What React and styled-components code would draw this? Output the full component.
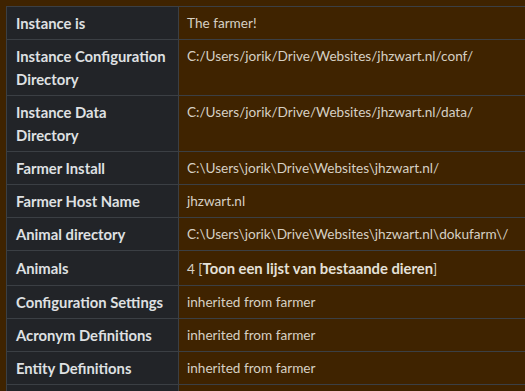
import React from 'react';
import styled, { createGlobalStyle } from 'styled-components';

const GlobalStyle = createGlobalStyle`
  html, body {
    margin: 0;
    background: #3f2300;
    overflow: hidden;
  }
`;

const rows = [
  { label: 'Instance is', value: 'The farmer!' },
  { label: 'Instance Configuration Directory', value: 'C:/Users/jorik/Drive/Websites/jhzwart.nl/conf/' },
  { label: 'Instance Data Directory', value: 'C:/Users/jorik/Drive/Websites/jhzwart.nl/data/' },
  { label: 'Farmer Install', value: 'C:\\Users\\jorik\\Drive\\Websites\\jhzwart.nl/' },
  { label: 'Farmer Host Name', value: 'jhzwart.nl' },
  { label: 'Animal directory', value: 'C:\\Users\\jorik\\Drive\\Websites\\jhzwart.nl\\dokufarm\\/' },
  { label: 'Animals', animals: true },
  { label: 'Configuration Settings', value: 'inherited from farmer' },
  { label: 'Acronym Definitions', value: 'inherited from farmer' },
  { label: 'Entity Definitions', value: 'inherited from farmer' },
];

const App = () => {
  return (
    <Page>
      <GlobalStyle />
      <InfoTable>
        <tbody>
          {rows.map((row) => (
            <tr key={row.label}>
              <Label $tall={row.animals}>{row.label}</Label>
              <Value $tall={row.animals}>
                {row.animals ? (
                  <>
                    4 [<ListLink>Toon een lijst van bestaande dieren</ListLink>]
                  </>
                ) : (
                  row.value
                )}
              </Value>
            </tr>
          ))}
          {/* next row, cut off by the window */}
          <tr>
            <Label />
            <Value />
          </tr>
        </tbody>
      </InfoTable>
    </Page>
  );
};

export default App;

const Page = styled.div`
  width: 100%;
  height: 391px;
  overflow: hidden;
  box-sizing: border-box;
  padding: 6px 0 0 6px;
  font-family: Lato, 'Liberation Sans', sans-serif;
`;

const InfoTable = styled.table`
  width: 560px;
  border-collapse: collapse;
  border: 1px solid #3b3f44;
  tr {
    border-top: 1px solid #3b3f44;
  }
`;

const Label = styled.th`
  width: 154px;
  height: 23px;
  text-align: left;
  vertical-align: top;
  padding: ${(p) => (p.$tall ? '6px 8px 5px 9px' : '5px 8px 4px 9px')};
  background: #222428;
  color: #dfe0e2;
  font-size: 14.8px;
  line-height: 23px;
  font-weight: 700;
  border-right: 1px solid #3b3f44;
`;

const Value = styled.td`
  vertical-align: top;
  padding: ${(p) => (p.$tall ? '6px 8px 5px 8px' : '5px 8px 4px 8px')};
  background: #3f2300;
  color: #d6d0c4;
  font-size: 13.6px;
  line-height: 22px;
`;

const ListLink = styled.span`
  font-weight: 700;
  font-size: 14.8px;
  color: #e4e0d8;
`;
